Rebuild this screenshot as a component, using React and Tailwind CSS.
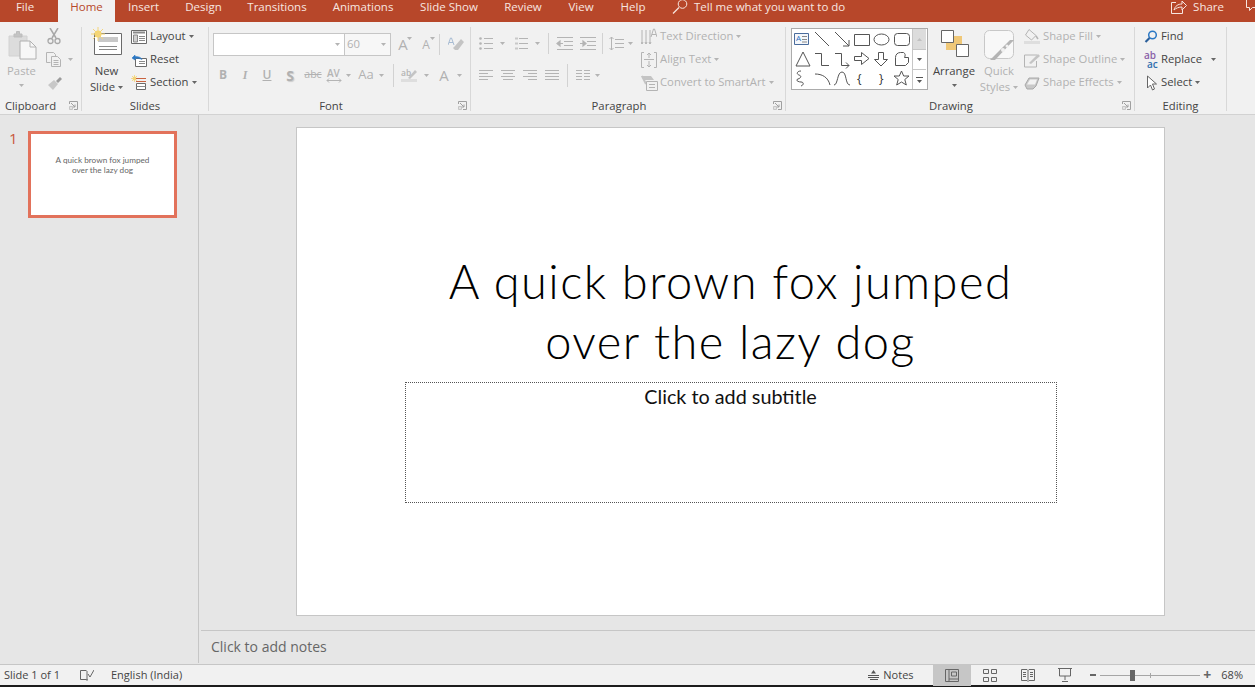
import React from "react";

const GREY = "#b4b4b4";

function Svg({ w, h, className = "", children }) {
  return (
    <svg width={w} height={h} viewBox={`0 0 ${w} ${h}`} fill="none" stroke={GREY} strokeWidth="1" className={`shrink-0 ${className}`}>
      {children}
    </svg>
  );
}

function Caret({ color = "#b4b4b4", className = "" }) {
  return (
    <svg width="5" height="3" viewBox="0 0 5 3" className={`shrink-0 ${className}`}>
      <path d="M0 0h5L2.5 3z" fill={color} />
    </svg>
  );
}

function Launcher({ className = "" }) {
  return (
    <svg width="9" height="9" viewBox="0 0 9 9" fill="none" stroke="#a0a0a0" className={`absolute top-[4px] ${className}`}>
      <path d="M.5 3V.5h8v8H5" />
      <path d="M2 2l4 4M6 3.5V6H3.5" />
      <path d="M.5 5.5h3v3h-3z" fill="#e2e2e2" stroke="#c6c6c6" />
    </svg>
  );
}

function Group({ body, width, label, pr = "", launcher, children }) {
  return (
    <>
      <div className={`${width} shrink-0 flex flex-col`}>
        <div className={`${body} h-[73px] flex -mt-[2px]`}>{children}</div>
        <div className={`relative h-[17px] leading-[17px] text-center text-[#444] ${pr}`}>
          {label}
          {launcher}
        </div>
      </div>
      <div className="w-px h-[84px] mt-px shrink-0 bg-[#d8d8d8]" />
    </>
  );
}

function SideRow({ icon, text, muted, caret, caretGap = "ml-[3px]", gap = "ml-[3px]" }) {
  return (
    <div className="h-[23px] flex items-center whitespace-nowrap">
      <div className="w-[16px] flex justify-center shrink-0">{icon}</div>
      <span className={`${gap} ${muted ? "text-[#b1b1b1]" : "text-[#444]"}`}>{text}</span>
      {caret && <Caret className={caretGap} color={muted ? "#b4b4b4" : "#666"} />}
    </div>
  );
}

function Clipboard() {
  return (
    <Group width="w-[81px]" body="" label="Clipboard" pr="pr-[20px]" launcher={<Launcher className="left-[69px]" />}>
      <div className="w-[43px] flex flex-col items-center pt-[7px]">
        <Svg w={30} h={29} className="ml-[3px]">
          <path d="M1 5h18v20H1z" fill="#dcdcdc" stroke="#d2d2d2" />
          <path d="M6 5V3h2.500V.5h3V3H14v3H6z" fill="#c4c4c4" stroke="#bdbdbd" />
          <path d="M12 10h10l6 6v12H12z" fill="#f7f7f7" stroke="#b0b0b0" />
          <path d="M22 10v6h6" />
        </Svg>
        <div className="h-[16px] leading-[16px] mt-[3px] text-[#b1b1b1]">Paste</div>
        <Caret className="mt-[5px]" />
      </div>
      <div className="flex flex-col pl-[3px] pt-px">
        <div className="h-[23px] flex items-center pl-[1px]">
          <Svg w={14} h={17}>
            <path d="M3 0l6 10M11 0L5 10" stroke="#a8a8a8" strokeWidth="1.500" />
            <circle cx="3.500" cy="13" r="2.500" stroke="#a8a8a8" strokeWidth="1.300" />
            <circle cx="10.500" cy="13" r="2.500" stroke="#a8a8a8" strokeWidth="1.300" />
          </Svg>
        </div>
        <div className="h-[23px] flex items-center">
          <Svg w={16} h={15}>
            <path d="M.5.5h7l2 2V4M.5.5v10h4" />
            <path d="M5.500 4.500h6l3 3v7h-9z" />
            <path d="M7.500 8.500h5M7.500 10.500h5M7.500 12.500h5" />
          </Svg>
          <Caret className="ml-[6px]" />
        </div>
        <div className="h-[23px] flex items-center pl-[1px]">
          <Svg w={16} h={14}>
            <path d="M9 5l4-4 2 2-4 4z" fill="#9c9c9c" stroke="none" />
            <path d="M1 9l6-5 4 4-5 6z" fill="#c8c8c8" stroke="none" />
          </Svg>
        </div>
      </div>
    </Group>
  );
}

function Slides() {
  return (
    <Group width="w-[126px]" body="" label="Slides">
      <div className="w-[49px] flex flex-col items-center pt-[3px]">
        <Svg w={32} h={29} className="ml-[1px]">
          <path d="M3.500 6.500h27v21h-27z" fill="#fff" stroke="#6a6a6a" />
          <path d="M7 10h20v5H7z" fill="#c8c8c8" stroke="none" />
          <path d="M8 19.500h18M8 22.500h18" stroke="#8a8a8a" />
          <circle cx="7" cy="7" r="3.500" fill="#f6d76e" stroke="none" />
          <path d="M7 0v14M0 7h14M2 2l10 10M12 2L2 12" stroke="#f4d479" />
        </Svg>
        <div className="h-[16px] leading-[16px] mt-[7px] text-[#444]">New</div>
        <div className="h-[16px] leading-[16px] flex items-center text-[#444]">
          Slide
          <Caret className="ml-[3px]" color="#666" />
        </div>
      </div>
      <div className="flex flex-col whitespace-nowrap pt-px">
        <SideRow
          text="Layout"
          caret
          icon={
            <Svg w={16} h={14}>
              <path d="M.5.5h15v13H.5z" fill="#fff" stroke="#6a6a6a" />
              <path d="M2 2.500h12" stroke="#8a8a8a" strokeWidth="2" />
              <path d="M2.500 5h4v7h-4z" fill="#d0d0d0" stroke="#8a8a8a" />
              <path d="M8 6.500h6M8 8.500h6M8 10.500h6" stroke="#8a8a8a" />
            </Svg>
          }
        />
        <SideRow
          text="Reset"
          icon={
            <Svg w={16} h={14}>
              <path d="M4.500 5.500h11v8h-11z" fill="#fff" stroke="#6a6a6a" />
              <path d="M8 8.500h6M8 10.500h6" stroke="#8a8a8a" />
              <path d="M1 5l3-3v1.500c4 0 6 1 7 3-2-1-4-1.500-7-1V7z" fill="#2b78c5" stroke="#2b78c5" strokeWidth=".6" />
            </Svg>
          }
        />
        <SideRow
          text="Section"
          caret
          icon={
            <Svg w={16} h={15}>
              <circle cx="3.500" cy="3.500" r="2" fill="#f6d76e" stroke="none" />
              <path d="M3.500 0v7M0 3.500h7M1 1l5 5M6 1L1 6" stroke="#f4d479" strokeWidth=".8" />
              <path d="M5 3.500h10M5 6.500h10" stroke="#c9623f" />
              <path d="M5.500 8.500h9v6h-9z" fill="#fff" stroke="#6a6a6a" />
              <path d="M5.500 11.500h9" stroke="#8a8a8a" />
            </Svg>
          }
        />
      </div>
    </Group>
  );
}

function Font() {
  return (
    <Group width="w-[261px]" body="pl-[4px]" label="Font" pr="pr-[17px]" launcher={<Launcher className="left-[249px]" />}>
      <div className="flex flex-col">
        <div className="flex items-center h-[32px] pt-[9px]">
          <div className="w-[132px] h-[23px] bg-white border border-[#c6c6c6] flex items-center justify-end pr-[4px]">
            <Caret />
          </div>
          <div className="w-[47px] h-[23px] -ml-px bg-[#f7f7f7] border border-[#c6c6c6] flex items-center justify-between pl-[2px] pr-[4px] text-[#b1b1b1]">
            60
            <Caret />
          </div>
          <div className="w-[24px] flex justify-center">
            <span className="text-[15px] leading-[15px] text-[#b1b1b1] relative">A<Caret className="absolute -right-[4px] top-0" /></span>
          </div>
          <div className="w-[22px] flex justify-center">
            <span className="text-[12px] leading-[15px] text-[#b1b1b1] relative">A<Caret className="absolute -right-[5px] top-0" /></span>
          </div>
          <div className="w-px h-[21px] bg-[#d2d2d2] ml-[2px]" />
          <Svg w={16} h={15} className="ml-[8px]">
            <path d="M7 9l6-7 3 3-6 8H7l-2-2z" fill="#c4c4c4" stroke="none" />
            <path d="M0 8l2.500-7h1L6 8M1 5.500h4" strokeWidth=".9" stroke="#9fb5cf" />
          </Svg>
        </div>
        <div className="flex items-center h-[34px] mt-[2px] text-[#b1b1b1] font-semibold">
          <span className="w-[20px] text-center text-[12px] font-bold">B</span>
          <span className="w-[24px] text-center text-[12px] italic font-['Liberation_Serif',serif]">I</span>
          <span className="w-[20px] text-center text-[12px] underline">U</span>
          <span className="w-[26px] text-center text-[14px] font-bold [text-shadow:1px_1px_1px_#ccc]">S</span>
          <span className="w-[20px] text-center text-[10.5px] font-normal line-through">abc</span>
          <div className="w-[22px] flex justify-center">
            <Svg w={16} h={15} className="overflow-visible">
              <text x="1" y="9" fontSize="10" fill={GREY} stroke="none" fontFamily="Open Sans, sans-serif">AV</text>
              <path d="M1 12.500h14M3 10.500l-2 2 2 2M13 10.500l2 2-2 2" />
            </Svg>
          </div>
          <Caret className="ml-[1px]" />
          <span className="w-[20px] ml-[5px] text-center text-[13px] font-normal">Aa</span>
          <Caret className="ml-[3px]" />
          <div className="w-px h-[23px] bg-[#d2d2d2] ml-[9px]" />
          <Svg w={16} h={16} className="ml-[7px] overflow-visible">
            <path d="M0 13.500h16" stroke="#dedede" strokeWidth="3" />
            <path d="M7 11l7-8 2 2-7 7z" fill="#c4c4c4" stroke="none" />
            <text x="0" y="9" fontSize="8.500" fill={GREY} stroke="none" fontFamily="Open Sans, sans-serif">ab</text>
          </Svg>
          <Caret className="ml-[7px]" />
          <span className="w-[14px] ml-[8px] text-center text-[15px] font-normal">A</span>
          <Caret className="ml-[6px]" />
        </div>
      </div>
    </Group>
  );
}

function Bullets({ numbered }) {
  return (
    <Svg w={14} h={14}>
      {[1.500, 6.500, 11.500].map((y) => (
        <g key={y}>
          <path d={`M5 ${y}h9`} />
          {numbered ? (
            <path d={`M1 ${y}h3`} strokeWidth="2" stroke="#c8c8c8" />
          ) : (
            <circle cx="1.500" cy={y} r="1.300" fill={GREY} stroke="none" />
          )}
        </g>
      ))}
    </Svg>
  );
}

function Indent({ flip }) {
  return (
    <Svg w={17} h={14}>
      <path d="M1 .5h16M8 4.500h9M8 8.500h9M1 12.500h16" />
      <path d={flip ? "M1 6.500h3.500M4 4v5l3-2.500z" : "M7 6.500H3.500M4 4v5L1 6.500z"} fill={GREY} strokeWidth="1.200" />
    </Svg>
  );
}

function Align({ rows }) {
  return (
    <Svg w={14} h={11}>
      {rows.map(([a, b], i) => (
        <path key={i} d={`M${a} ${i * 3 + 0.5}H${b}`} />
      ))}
    </Svg>
  );
}

function Paragraph() {
  return (
    <Group width="w-[314px]" body="pl-[8px]" label="Paragraph" pr="pr-[18px]" launcher={<Launcher className="left-[302px]" />}>
      <div className="w-[162px] flex flex-col">
        <div className="flex items-center h-[31px] pt-[8px]">
          <Bullets />
          <Caret className="ml-[7px]" />
          <div className="ml-[9px]"><Bullets numbered /></div>
          <Caret className="ml-[7px]" />
          <div className="w-px h-[21px] bg-[#d2d2d2] ml-[8px]" />
          <div className="ml-[7px]"><Indent /></div>
          <div className="ml-[6px]"><Indent flip /></div>
          <div className="w-px h-[21px] bg-[#d2d2d2] ml-[6px]" />
          <Svg w={15} h={15} className="ml-[6px]">
            <path d="M6 2h9M6 6h9M6 10h9" transform="translate(0 1.500)" />
            <path d="M2.500 1v13M.5 3l2-2 2 2M.5 12l2 2 2-2" />
          </Svg>
          <Caret className="ml-[4px]" />
        </div>
        <div className="flex items-center h-[34px] mt-[3px]">
          <Align rows={[[0, 14], [0, 9], [0, 14], [0, 9]]} />
          <div className="ml-[8px]"><Align rows={[[0, 14], [2, 12], [0, 14], [2, 12]]} /></div>
          <div className="ml-[8px]"><Align rows={[[0, 14], [5, 14], [0, 14], [5, 14]]} /></div>
          <div className="ml-[8px]"><Align rows={[[0, 14], [0, 14], [0, 14], [0, 14]]} /></div>
          <div className="w-px h-[23px] bg-[#d2d2d2] ml-[8px]" />
          <Svg w={14} h={11} className="ml-[8px]">
            <path d="M0 .5h6M8 .5h6M0 3.500h6M8 3.500h6M0 6.500h6M8 6.500h6M0 9.500h6M8 9.500h6" />
          </Svg>
          <Caret className="ml-[5px]" />
        </div>
      </div>
      <div className="flex flex-col pt-px">
        <SideRow
          muted
          caret
          text="Text Direction"
          icon={
            <Svg w={16} h={17}>
              <path d="M1 2v14M5 2v14M9 2v14" />
              <path d="M0 14l1 2 1-2M4 14l1 2 1-2M8 14l1 2 1-2" />
              <path d="M10 9l2.500-8h1L16 9M11 6.500h4" />
            </Svg>
          }
        />
        <SideRow
          muted
          caret
          text="Align Text"
          icon={
            <Svg w={16} h={16}>
              <path d="M3 .5H.5v15H3M13 .5h2.500v15H13" />
              <path d="M3 7.500h10M8 1v5M6 3l2-2 2 2M8 9v6M6 13l2 2 2-2" />
            </Svg>
          }
        />
        <SideRow
          muted
          caret
          text="Convert to SmartArt"
          icon={
            <Svg w={17} h={16}>
              <path d="M0 1h10l3 4H3z" fill="#c4c4c4" stroke="none" />
              <path d="M1 1l4 8" stroke="#c4c4c4" strokeWidth="2" />
              <path d="M5.500 6.500h11v9h-11zM8 9.500h6M8 12.500h6" />
            </Svg>
          }
        />
      </div>
    </Group>
  );
}

function ShapesGallery() {
  return (
    <div className="flex h-[62px] w-[137px] bg-white border border-[#ababab] mt-[4px]">
      <svg width="121" height="60" viewBox="0 0 121 60" fill="none" stroke="#555" strokeWidth="1">
        <path d="M2.500 4.500h14v11h-14z" stroke="#4a6c9c" fill="#f4f7fb" />
        <text x="4" y="12" fontSize="8" fill="#2b6fc0" stroke="none" fontFamily="Open Sans, sans-serif">A</text>
        <path d="M10 7.500h5M10 10.500h5M10 13h5" stroke="#8a8a8a" />
        <path d="M23 3l14 14" />
        <path d="M43 3l14 14M57 11v6h-6" />
        <path d="M62.500 5.500h15v11h-15z" />
        <ellipse cx="89.500" cy="10.500" rx="7.500" ry="5.500" />
        <rect x="102.500" y="4.500" width="15" height="12" rx="3" />
        <path d="M11 23l7 14H4z" />
        <path d="M23 24.500h6.500v12H37" />
        <path d="M43 24.500h6.500v12H57M54 33.500l3 3-3 3" />
        <path d="M62.500 27.500h7v-4l7.500 6-7.500 6v-4h-7z" />
        <path d="M86.500 23.500h5v7h4l-6.500 6.500-6.500-6.500h4z" />
        <path d="M103.500 36.500v-8c0-3 2-5 5-5h3c2 1 2 3 1 5h4v5l-3 3z" />
        <path d="M9 42c-4 0-5 3-2 4s2 3-1 4 0 3 3 3 3 3 0 4" />
        <path d="M23 45c7 0 13 3 15 11" />
        <path d="M42 56c4 0 3-13 8-13s3 13 8 13" />
        <text x="65" y="54" fontSize="12" fill="#333" stroke="none" fontFamily="Open Sans, sans-serif">{"{"}</text>
        <text x="87" y="54" fontSize="12" fill="#333" stroke="none" fontFamily="Open Sans, sans-serif">{"}"}</text>
        <path d="M109.500 42l2.200 5h5.300l-4.200 3.500 1.500 5.500-4.800-3-4.800 3 1.500-5.500-4.200-3.500h5.300z" />
      </svg>
      <div className="w-[14px] flex flex-col border-l border-[#c6c6c6] -ml-px">
        <div className="h-[21px] bg-[#dcdcdc] border-b border-[#c6c6c6] flex items-center justify-center">
          <Caret className="rotate-180" color="#c0c0c0" />
        </div>
        <div className="h-[20px] border-b border-[#c6c6c6] flex items-center justify-center">
          <Caret color="#555" />
        </div>
        <div className="flex-1 flex flex-col items-center justify-center gap-[2px]">
          <div className="w-[7px] h-px bg-[#555]" />
          <Caret color="#555" />
        </div>
      </div>
    </div>
  );
}

function Drawing() {
  return (
    <Group width="w-[348px]" body="pl-[5px]" label="Drawing" pr="pr-[18px]" launcher={<Launcher className="left-[336px]" />}>
      <ShapesGallery />
      <div className="w-[52px] flex flex-col items-center pt-[6px]">
        <Svg w={28} h={27} className="ml-[1px]">
          <path d="M5 6h16v14H5z" fill="#f0c878" stroke="none" />
          <path d="M.5.5h12v12H.5z" fill="#fff" stroke="#666" />
          <path d="M15.500 14.500h12v12h-12z" fill="#fff" stroke="#666" />
        </Svg>
        <div className="h-[16px] leading-[16px] mt-[6px] text-[#444]">Arrange</div>
        <Caret className="mt-[5px]" color="#666" />
      </div>
      <div className="w-[38px] flex flex-col items-center pt-[6px] text-[#b1b1b1]">
        <Svg w={31} h={31} className="ml-[1px]">
          <rect x=".5" y=".5" width="29" height="28" rx="5" fill="#f8f8f8" stroke="#c8c8c8" />
          <path d="M30 10L11 30H6l6-6 14-14z" fill="#b4b4b4" stroke="none" />
          <circle cx="19" cy="20" r="2" fill="#f1f1f1" stroke="none" />
          <circle cx="23" cy="16" r="1.500" fill="#f1f1f1" stroke="none" />
        </Svg>
        <div className="h-[16px] leading-[16px] mt-[2px]">Quick</div>
        <div className="h-[16px] leading-[16px] flex items-center">
          Styles
          <Caret className="ml-[3px]" />
        </div>
      </div>
      <div className="ml-[6px] flex flex-col pt-px">
        <SideRow
          muted
          caret
          text="Shape Fill"
          icon={
            <Svg w={16} h={16}>
              <path d="M0 13.500h16" stroke="#dedede" strokeWidth="3" />
              <path d="M5 .5l7 6-4.500 4.500-6-5z" />
              <path d="M12 7l2 3" strokeWidth="1.500" />
            </Svg>
          }
        />
        <SideRow
          muted
          caret
          text="Shape Outline"
          icon={
            <Svg w={16} h={16}>
              <path d="M13 3H.5v12h12V9" />
              <path d="M5 11l9-9 2 2-9 8z" fill="#c4c4c4" stroke="none" />
            </Svg>
          }
        />
        <SideRow
          muted
          caret
          text="Shape Effects"
          icon={
            <Svg w={16} h={14}>
              <path d="M1 9l4-7h10l-3 8-3 3H3z" fill="#c8c8c8" stroke="#a8a8a8" />
              <path d="M3 8.500l3-5h7l-2 5z" fill="#f2f2f2" stroke="none" />
            </Svg>
          }
        />
      </div>
    </Group>
  );
}

function Editing() {
  return (
    <Group width="w-[91px]" body="pl-[8px]" label="Editing">
      <div className="flex flex-col pt-px">
        <SideRow
          text="Find"
          gap="ml-[2px]"
          icon={
            <Svg w={14} h={13}>
              <circle cx="8.500" cy="5" r="3.800" stroke="#2b78c5" strokeWidth="1.500" />
              <path d="M5.500 8l-4 4" stroke="#2b5f9a" strokeWidth="2.200" />
            </Svg>
          }
        />
        <div className="h-[23px] flex items-center whitespace-nowrap">
          <div className="w-[16px] h-[18px] shrink-0 text-[10px] leading-[9px] font-semibold">
            <div className="text-[#8a5fa8] pl-[1px]">ab</div>
            <div className="text-[#3170b0] pl-[4px]">ac</div>
          </div>
          <span className="ml-[2px] text-[#444]">Replace</span>
          <Caret className="ml-[9px]" color="#666" />
        </div>
        <SideRow
          text="Select"
          caret
          gap="ml-[2px]"
          icon={
            <Svg w={11} h={16}>
              <path d="M1.500 1v12l3-3 2 5 2-1-2-5h4z" stroke="#666" fill="#fff" />
            </Svg>
          }
        />
      </div>
    </Group>
  );
}

const TABS = [
  ["Insert", "w-[57px]"],
  ["Design", "w-[63px]"],
  ["Transitions", "w-[84px]"],
  ["Animations", "w-[88px]"],
  ["Slide Show", "w-[84px]"],
  ["Review", "w-[64px]"],
  ["View", "w-[52px]"],
  ["Help", "w-[52px]"],
];

function TitleBar() {
  return (
    <div className="h-[22px] bg-[#b7472a] flex text-[#f7e6e0] text-[11.5px] whitespace-nowrap leading-[14px]">
      <div className="w-[58px] pr-[8px] text-center">File</div>
      <div className="w-[57px] h-[22px] bg-[#f1f1f1] text-[#b7472a] text-center">Home</div>
      {TABS.map(([name, w]) => (
        <div key={name} className={`${w} text-center`}>{name}</div>
      ))}
      <svg width="17" height="16" viewBox="0 0 17 16" fill="none" stroke="#f7e6e0" className="ml-[13px] -mt-[1px] shrink-0">
        <circle cx="10.500" cy="5" r="4.300" />
        <path d="M7 8.500L1 14.500" strokeWidth="1.300" />
      </svg>
      <span className="ml-[5px]">Tell me what you want to do</span>
      <div className="flex-1" />
      <svg width="16" height="14" viewBox="0 0 16 14" fill="none" stroke="#f7e6e0" className="shrink-0">
        <path d="M5 2.500H.5v11h11V9" />
        <path d="M3 10c1-4 4-6 8-6V1l4.500 4.500L11 10V7c-3 0-6 1-8 3z" />
      </svg>
      <span className="ml-[6px]">Share</span>
      <svg width="14" height="15" viewBox="0 0 14 15" fill="none" stroke="#f7e6e0" className="ml-[22px] mr-[-5px] -mt-[3px] shrink-0">
        <path d="M.5.5v10h3v3l3-3h8" />
      </svg>
    </div>
  );
}

function Slide() {
  return (
    <div className="flex-1 min-h-0 pl-[97px] pt-[12px]">
      <div className="w-[869px] h-[489px] bg-white border border-[#c6c6c6] flex flex-col items-center pt-[123px] font-['Lato',sans-serif]">
        <h1 className="text-[47px] leading-[60px] font-light text-center text-black tracking-[1.45px]">
          A quick brown fox jumped
          <br />
          over the lazy dog
        </h1>
        <div className="w-[652px] h-[121px] mt-[11px] border border-dotted border-[#555] text-center text-[19.8px] leading-[26px] text-[#111]">
          Click to add subtitle
        </div>
      </div>
    </div>
  );
}

function StatusBar() {
  return (
    <div className="h-[23px] bg-[#f1f1f1] border-t border-[#c6c6c6] border-b-[2px] border-b-[#1c1c1c] flex items-center text-[11px] text-[#444] whitespace-nowrap">
      <span className="ml-[4px] w-[76px]">Slide 1 of 1</span>
      <svg width="14" height="14" viewBox="0 0 14 14" fill="none" stroke="#666" className="shrink-0">
        <path d="M6.500 2.500H.5v9h6l.5 1 .5-1M7 3v9" />
        <path d="M8 6l2 3 4-7" />
      </svg>
      <span className="ml-[17px]">English (India)</span>
      <div className="flex-1" />
      <svg width="12" height="12" viewBox="0 0 12 12" fill="none" stroke="#555" className="shrink-0">
        <path d="M0 6.500h11M0 8.500h11M2 10.500h8" />
        <path d="M5.500 1L8 4.500H3z" fill="#555" stroke="none" />
      </svg>
      <span className="ml-[3px] w-[50px]">Notes</span>
      <div className="w-[38px] h-[21px] bg-[#c6c6c6] flex items-center justify-center">
        <svg width="14" height="13" viewBox="0 0 14 13" fill="none" stroke="#666">
          <path d="M.5.5h13v12H.5zM4 .5v12M6.500 3h5v4h-5zM4 10h9.500" />
        </svg>
      </div>
      <svg width="14" height="13" viewBox="0 0 14 13" fill="none" stroke="#666" className="ml-[12px] shrink-0">
        <path d="M.5.5h5v4h-5zM8.500.5h5v4h-5zM.5 8.500h5v4h-5zM8.500 8.500h5v4h-5z" />
      </svg>
      <svg width="14" height="13" viewBox="0 0 14 13" fill="none" stroke="#666" className="ml-[24px] shrink-0">
        <path d="M.5.5h5.500l1 1 1-1h5.500v11H8l-1 1-1-1H.5zM7 1.500v10M2 3.500h3M2 5.500h3M2 7.500h3M9 3.500h3M9 5.500h3M9 7.500h3" />
      </svg>
      <svg width="14" height="14" viewBox="0 0 14 14" fill="none" stroke="#666" className="ml-[23px] shrink-0">
        <path d="M0 .5h14M1.500 1v7h11V1M7 8v4M4 13.500h6" />
      </svg>
      <div className="ml-[18px] w-[6px] h-[2px] bg-[#666]" />
      <div className="ml-[4px] w-[100px] h-px bg-[#a6a6a6] flex items-center">
        <div className="ml-[30px] w-[5px] h-[11px] bg-[#666]" />
        <div className="ml-[15px] w-px h-[5px] bg-[#a6a6a6]" />
      </div>
      <div className="ml-[3px] text-[14px] leading-[14px] text-[#666] w-[10px] font-bold">+</div>
      <span className="ml-[8px] mr-[12px]">68%</span>
    </div>
  );
}

export default function App() {
  return (
    <div className="w-[1255px] h-[687px] overflow-hidden flex flex-col bg-[#e6e6e6] font-['Open_Sans',sans-serif] text-[11.3px]">
      <TitleBar />
      <div className="h-[93px] shrink-0 bg-[#f1f1f1] border-b border-[#d2d2d2] flex items-start pt-[4px]">
        <Clipboard />
        <Slides />
        <Font />
        <Paragraph />
        <Drawing />
        <Editing />
      </div>
      <div className="flex-1 min-h-0 flex">
        <div className="w-[199px] shrink-0 h-[548px] border-r border-[#c6c6c6] flex items-start pt-[16px]">
          <span className="w-[28px] pl-[9px] text-[15px] leading-[15px] text-[#c9583c]">1</span>
          <div className="w-[149px] h-[87px] bg-white border-[3px] border-[#e2725b] font-['Lato',sans-serif] text-[8.2px] leading-[10px] text-center text-[#666] pt-[21px]">
            A quick brown fox jumped
            <br />
            over the lazy dog
          </div>
        </div>
        <div className="flex-1 min-w-0 flex flex-col">
          <Slide />
          <div className="h-[34px] ml-[2px] border-t border-[#c6c6c6] pl-[10px] leading-[31px] text-[14px] text-[#666]">
            Click to add notes
          </div>
        </div>
      </div>
      <StatusBar />
    </div>
  );
}
